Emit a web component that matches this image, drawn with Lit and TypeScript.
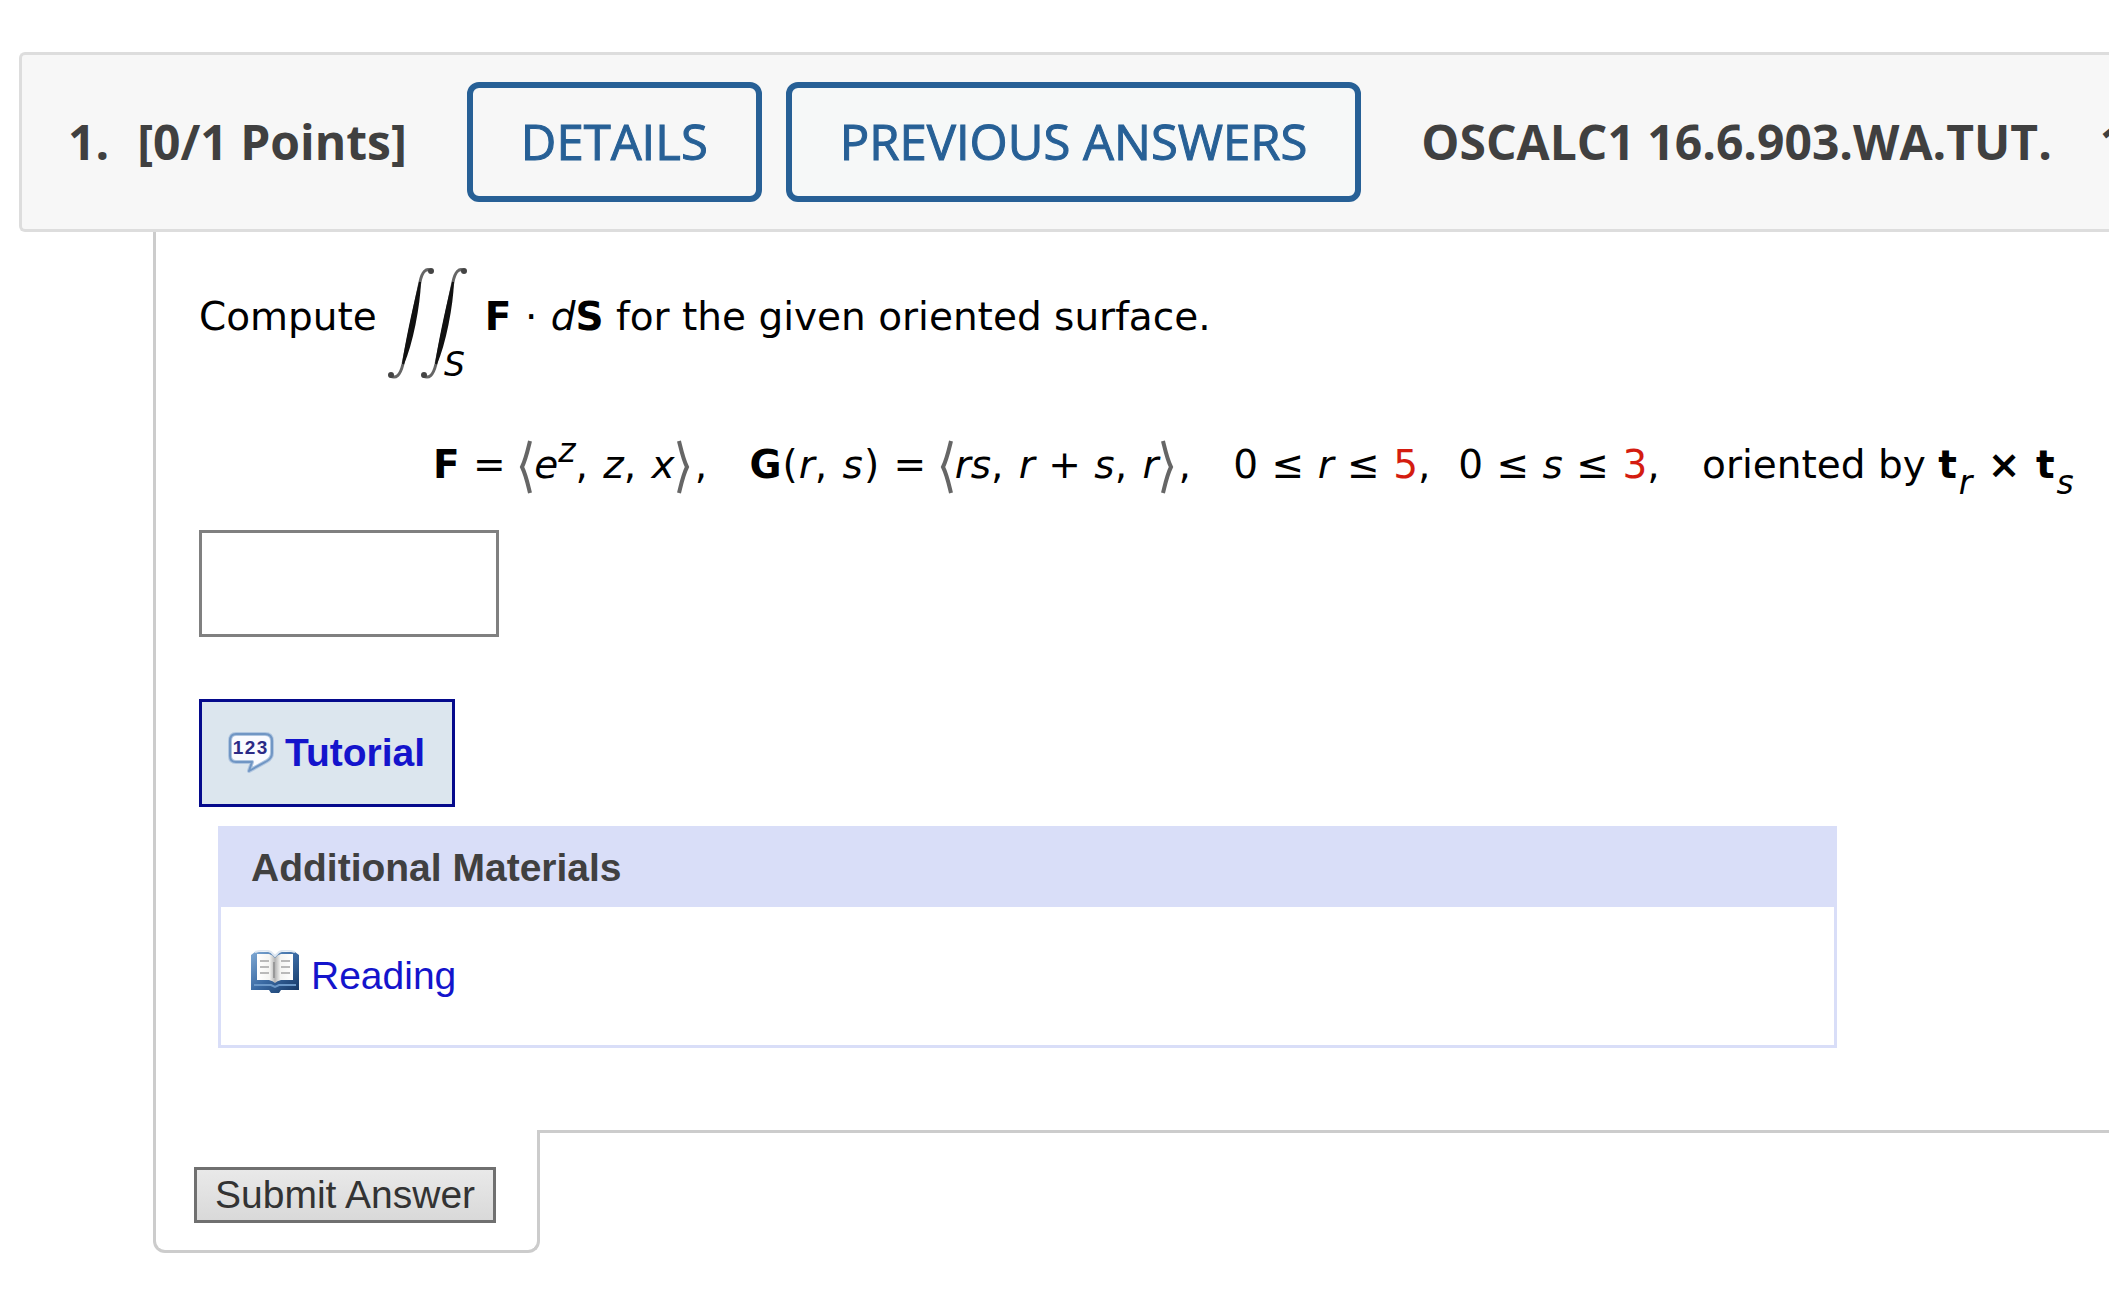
import { LitElement, html, css, svg } from "lit";
import { customElement } from "lit/decorators.js";

const openAngle = html`<svg class="angle" viewBox="0 0 13 54" aria-hidden="true">
  <path d="M11 1 C9 9 7 19 3 27 C7 35 9 45 11 53" />
</svg>`;

const closeAngle = html`<svg class="angle close" viewBox="0 0 13 54" aria-hidden="true">
  <path d="M2 1 C4 9 6 19 10 27 C6 35 4 45 2 53" />
</svg>`;

const comma = html`<span class="comma">,</span>`;

const op = (symbol: string) => html`<span class="op">${symbol}</span>`;

const product = (symbol: string) => html`<span class="product">${symbol}</span>`;

const integralStroke = (x: number) => svg`<g transform="translate(${x} 0)">
  <path class="thin" d="M1 109 C7 112 11 109 14 97 L31 15 C33 5 37 0 43 4" />
  <path class="thick" d="M14 97 C16 84 24 44 31 15 C30 40 23 76 14 97 Z" />
  <circle cx="2" cy="108" r="3" fill="#444" />
  <circle cx="42" cy="4" r="3" fill="#444" />
</g>`;

@customElement("app-root")
export class AppRoot extends LitElement {
  static styles = css`
    :host {
      display: block;
      overflow: hidden;
      color: #000;
      font-family: "DejaVu Sans", Verdana, sans-serif;
      font-size: 39px;
      line-height: 48px;
    }
    * {
      box-sizing: border-box;
    }
    .header {
      display: flex;
      align-items: center;
      height: 180px;
      margin: 52px 0 0 19px;
      padding-left: 46px;
      border: 3px solid #ddd;
      border-right: 0;
      border-radius: 6px 0 0 6px;
      background: #f7f7f7;
      color: #404040;
      font-family: "Open Sans", "Noto Sans", sans-serif;
      font-size: 48px;
      font-weight: 700;
      line-height: 64px;
      white-space: nowrap;
      overflow: hidden;
    }
    .header > * {
      flex: none;
    }
    .title {
      display: flex;
      margin: 0;
      gap: 28px;
      font-size: inherit;
    }
    .actions {
      display: flex;
      gap: 24px;
      margin: 0 60px;
    }
    .action {
      height: 120px;
      padding: 0 48px 2px;
      border: 6px solid #276096;
      border-radius: 12px;
      background: #f7f7f7;
      color: #276096;
      font: 400 49px/64px "Open Sans", "Noto Sans", sans-serif;
      -webkit-text-stroke: 1px #276096;
    }
    .action.current {
      background: #f6f8f8;
    }
    .attempts {
      margin-left: 48px;
    }
    .body {
      margin-left: 153px;
      padding: 35px 5px 82px 43px;
      border-left: 3px solid #ccc;
    }
    .body p {
      margin: 0;
      white-space: nowrap;
    }
    .prompt {
      display: flex;
      align-items: center;
      height: 112px;
    }
    .words {
      padding-bottom: 12px;
    }
    .integral {
      display: flex;
      position: relative;
      margin: 0 18px 0 12px;
    }
    .integral svg {
      width: 78px;
      height: 112px;
      overflow: visible;
    }
    .thin,
    .angle path {
      fill: none;
      stroke: #666;
      stroke-width: 3;
    }
    .angle path {
      stroke-width: 4;
    }
    .thick {
      fill: #111;
      stroke: #111;
      stroke-width: 2;
    }
    .domain {
      position: absolute;
      right: 2px;
      bottom: -6px;
      font-size: 33px;
      line-height: 40px;
    }
    .formula {
      padding: 61px 0 0 234px;
      height: 151px;
    }
    .angle {
      width: 13px;
      height: 54px;
      margin-right: 2px;
      vertical-align: -16px;
    }
    .angle.close {
      margin: 0 5px 0 2px;
    }
    .comma {
      margin-right: 3px;
    }
    .op {
      margin: 0 1px;
    }
    .product {
      margin: 0 3px;
    }
    .formula sup,
    .formula sub {
      font-size: 33px;
      line-height: 0;
    }
    .formula sup {
      vertical-align: 16px;
    }
    .formula sub {
      margin-left: 2px;
      vertical-align: -16px;
    }
    .next {
      margin-left: 30px;
    }
    .value {
      color: #d41c10;
    }
    .answer {
      display: block;
      width: 300px;
      height: 107px;
      padding: 0 12px;
      border: 3px solid #808080;
      border-radius: 0;
      background: #fff;
      font: inherit;
    }
    .tutorial {
      display: inline-flex;
      align-items: center;
      gap: 11px;
      height: 108px;
      margin: 62px 0 19px;
      padding: 0 27px 0 26px;
      border: 3px solid #050a8c;
      background: #dce6ee;
      color: #1414cc;
      font: 700 39px/48px "Liberation Sans", Arial, sans-serif;
      text-decoration: none;
      vertical-align: top;
    }
    .tutorial svg {
      width: 46px;
      height: 42px;
    }
    .materials {
      width: 85%;
      height: 222px;
      margin-left: 19px;
      border: 3px solid #d9def8;
      font-family: "Liberation Sans", Arial, sans-serif;
    }
    .materials h2 {
      margin: 0;
      padding: 15px 30px;
      background: #d9def8;
      color: #404040;
      font-size: 39px;
      line-height: 48px;
    }
    .reading {
      display: inline-flex;
      align-items: center;
      gap: 12px;
      padding: 43px 30px;
      color: #1414cc;
      text-decoration: none;
    }
    .reading svg {
      width: 48px;
      height: 43px;
      margin-bottom: 8px;
    }
    .footer {
      display: flex;
      align-items: flex-start;
      margin-left: 153px;
    }
    .submit-box {
      height: 123px;
      padding: 37px 41px 0 38px;
      border: 3px solid #ccc;
      border-top: 0;
      border-radius: 0 0 12px 12px;
    }
    .rule {
      flex: 1;
      height: 3px;
      background: #ccc;
    }
    .submit {
      display: block;
      height: 56px;
      padding: 0 18px;
      border: 3px solid #707070;
      border-radius: 0;
      background: linear-gradient(#e9e9e9, #d9d9d9);
      color: #333;
      font: 400 39px/48px "Liberation Sans", Arial, sans-serif;
    }
  `;

  render() {
    return html`
      <header class="header">
        <h1 class="title"><span>1.</span><span>[0/1 Points]</span></h1>
        <div class="actions">
          <button class="action" type="button">DETAILS</button>
          <button class="action current" type="button">PREVIOUS ANSWERS</button>
        </div>
        <span>OSCALC1 16.6.903.WA.TUT.</span>
        <span class="attempts">1</span>
      </header>

      <main class="body">
        <p class="prompt">
          <span class="words">Compute</span>
          <span class="integral">
            <svg viewBox="0 0 78 112" aria-hidden="true">${integralStroke(0)}${integralStroke(33)}</svg>
            <i class="domain">S</i>
          </span>
          <span class="words"><b>F</b> ${op("·")} <i>d</i><b>S</b> for the given oriented surface.</span>
        </p>

        <p class="formula">
          <b>F</b> ${op("=")} ${openAngle}<i>e</i><sup><i>z</i></sup>${comma} <i>z</i>${comma} <i>x</i>${closeAngle},
          <span class="next"><b>G</b>${op("(")}<i>r</i>${comma} <i>s</i>${op(")")} ${op("=")} ${openAngle}<i>rs</i>${comma} <i>r</i> ${op("+")} <i>s</i>${comma} <i>r</i>${closeAngle},</span>
          <span class="next">0 ${op("≤")} <i>r</i> ${op("≤")} <span class="value">5</span>${comma}&nbsp; 0 ${op("≤")} <i>s</i> ${op("≤")} <span class="value">3</span>,</span>
          <span class="next">oriented by <b>t</b><sub><i>r</i></sub> <b>${product("×")}</b> <b>t</b><sub><i>s</i></sub></span>
        </p>

        <input class="answer" type="text" aria-label="Answer" />

        <a class="tutorial" href="#tutorial">
          <svg viewBox="0 0 46 42" aria-hidden="true">
            <path
              d="M8 2 H37 Q44 2 44 9 V21 Q44 26 39 29 L21 39 L24 30 H8 Q2 30 2 24 V9 Q2 2 8 2 Z"
              fill="#fafbff" stroke="#b0c6e0" stroke-width="4" stroke-linejoin="round" />
            <path
              d="M8 2 H37 Q44 2 44 9 V21 Q44 26 39 29 L21 39 L24 30 H8 Q2 30 2 24 V9 Q2 2 8 2 Z"
              fill="none" stroke="#7096c4" stroke-width="2" stroke-linejoin="round" />
            <text x="10 22 34" y="22" text-anchor="middle" font-family="Liberation Sans" font-size="19" font-weight="700" fill="#2c2a86">123</text>
          </svg>
          <span>Tutorial</span>
        </a>

        <section class="materials">
          <h2>Additional Materials</h2>
          <a class="reading" href="#reading">
            <svg viewBox="0 0 48 43" aria-hidden="true">
              <defs>
                <linearGradient id="cover" x1="0" y1="0" x2="1" y2="1">
                  <stop offset="0" stop-color="#7fa9d4" />
                  <stop offset="0.5" stop-color="#3a6aa3" />
                  <stop offset="1" stop-color="#133562" />
                </linearGradient>
                <linearGradient id="page" x1="0" x2="1">
                  <stop offset="0" stop-color="#fff" />
                  <stop offset="0.35" stop-color="#f4f4f2" />
                  <stop offset="0.5" stop-color="#b4b4b4" />
                  <stop offset="0.65" stop-color="#f4f4f2" />
                  <stop offset="1" stop-color="#fff" />
                </linearGradient>
              </defs>
              <path d="M0 5 L4 2 H20 L24 6 L28 2 H44 L48 5 V40 H30 L28 43 H20 L18 40 H0 Z" fill="url(#cover)" />
              <path d="M4 2 Q14 -1 20 2 L24 6 L28 2 Q34 -1 44 2" fill="none" stroke="#dfe8f2" stroke-width="2" />
              <path d="M6 4 H18 Q22 5 24 8 Q26 5 30 4 H42 V30 H30 Q26 31 24 33 Q22 31 18 30 H6 Z" fill="url(#page)" />
              <path d="M9 11 H18 M9 17 H18 M9 23 H18 M30 11 H39 M30 17 H39 M30 23 H39" stroke="#b9b9b9" stroke-width="2" />
              <path d="M23 12 V28" stroke="#999" stroke-width="2" />
              <path d="M3 35 H20 L24 37 L28 35 H45" fill="none" stroke="#6b98c8" stroke-width="2" />
            </svg>
            <span>Reading</span>
          </a>
        </section>
      </main>

      <footer class="footer">
        <div class="submit-box">
          <button class="submit" type="button">Submit Answer</button>
        </div>
        <div class="rule"></div>
      </footer>
    `;
  }
}
